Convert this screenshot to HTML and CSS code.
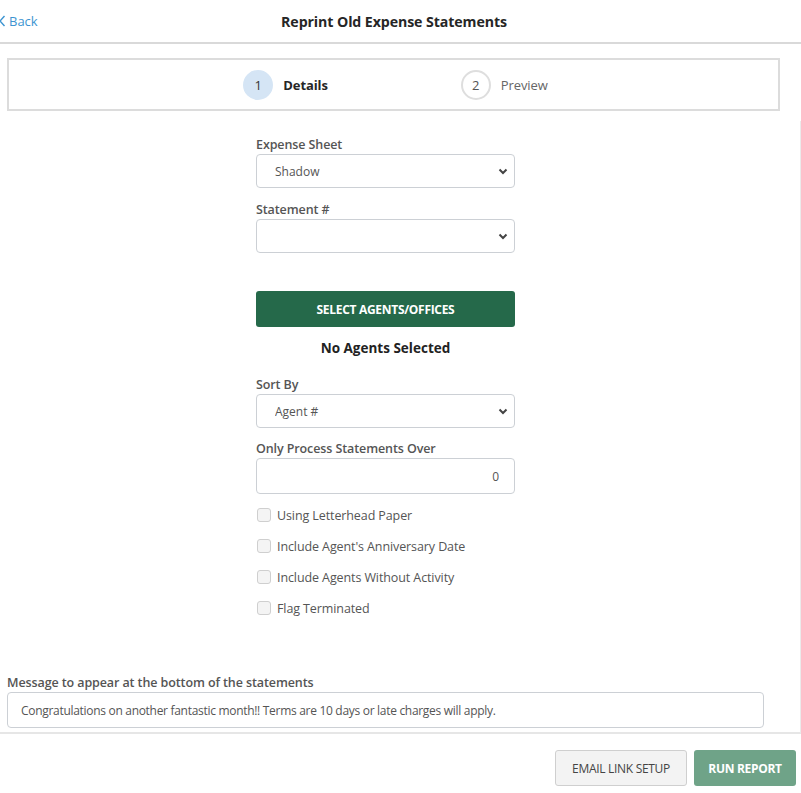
FILE: index.html
```html
<!DOCTYPE html>
<html lang="en">
<head>
<meta charset="utf-8">
<title>Reprint Old Expense Statements</title>
<link rel="stylesheet" href="styles.css">
</head>
<body>
<header class="topbar">
  <a class="back" href="#">
    <svg class="back-icon" width="7" height="12" viewBox="0 0 7 12"><path d="M5.5 1 L1 6 L5.5 11" fill="none" stroke="currentColor" stroke-width="1.4"/></svg>
    Back
  </a>
  <h1 class="title">Reprint Old Expense Statements</h1>
</header>

<nav class="stepper">
  <div class="step active"><span class="step-num">1</span><span class="step-label">Details</span></div>
  <div class="step"><span class="step-num">2</span><span class="step-label">Preview</span></div>
</nav>

<main class="content">
  <form class="form">
    <label class="field-label">Expense Sheet</label>
    <div class="select-wrap">
      <select class="control"><option>Shadow</option></select>
      <svg class="chev" width="10" height="7" viewBox="0 0 10 7"><path d="M1.5 1.5 L5 5 L8.5 1.5" fill="none" stroke="currentColor" stroke-width="2"/></svg>
    </div>

    <label class="field-label gap">Statement #</label>
    <div class="select-wrap">
      <select class="control"><option></option></select>
      <svg class="chev" width="10" height="7" viewBox="0 0 10 7"><path d="M1.5 1.5 L5 5 L8.5 1.5" fill="none" stroke="currentColor" stroke-width="2"/></svg>
    </div>

    <button type="button" class="btn-agents">SELECT AGENTS/OFFICES</button>
    <p class="no-agents">No Agents Selected</p>

    <label class="field-label sort">Sort By</label>
    <div class="select-wrap">
      <select class="control"><option>Agent #</option></select>
      <svg class="chev" width="10" height="7" viewBox="0 0 10 7"><path d="M1.5 1.5 L5 5 L8.5 1.5" fill="none" stroke="currentColor" stroke-width="2"/></svg>
    </div>

    <label class="field-label over">Only Process Statements Over</label>
    <input class="control number" type="text" value="0">

    <div class="checks">
      <label class="check"><span class="box"></span>Using Letterhead Paper</label>
      <label class="check"><span class="box"></span>Include Agent's Anniversary Date</label>
      <label class="check"><span class="box"></span>Include Agents Without Activity</label>
      <label class="check"><span class="box"></span>Flag Terminated</label>
    </div>
  </form>

  <section class="message">
    <label class="field-label">Message to appear at the bottom of the statements</label>
    <input class="control message-input" type="text" value="Congratulations on another fantastic month!! Terms are 10 days or late charges will apply.">
  </section>
</main>

<footer class="actions">
  <button type="button" class="btn-light">EMAIL LINK SETUP</button>
  <button type="button" class="btn-run">RUN REPORT</button>
</footer>
</body>
</html>
```

FILE: styles.css
```css
* { box-sizing: border-box; }

body {
  margin: 0;
  width: 801px;
  font-family: "Open Sans", "Noto Sans", sans-serif;
  color: #555;
  background: #fff;
}

/* top bar */
.topbar {
  height: 44px;
  border-bottom: 2px solid #d9d9d9;
  display: grid;
  grid-template-columns: 1fr auto 1fr;
  align-items: center;
  padding-right: 13px;
}
.back {
  display: flex;
  align-items: center;
  gap: 3px;
  color: #3d94d1;
  text-decoration: none;
  font-size: 13px;
  margin-left: -1px;
}
.title {
  margin: 0;
  font-size: 14.2px;
  font-weight: 700;
  color: #262626;
  letter-spacing: -0.1px;
}

/* step indicator */
.stepper {
  margin: 14px 21px 0 7px;
  height: 53px;
  border: 2px solid #dcdcdc;
  display: flex;
  justify-content: center;
  align-items: center;
  gap: 133px;
  padding-left: 4px;
}
.step {
  display: flex;
  align-items: center;
  gap: 10px;
}
.step-num {
  width: 30px;
  height: 30px;
  border-radius: 50%;
  border: 2px solid #dedede;
  display: flex;
  align-items: center;
  justify-content: center;
  font-size: 13px;
  color: #555;
}
.step.active .step-num {
  background: #d5e5f5;
  border-color: #d5e5f5;
  color: #333;
}
.step-label {
  font-size: 13px;
  color: #666;
  letter-spacing: -0.1px;
}
.step.active .step-label {
  font-weight: 700;
  color: #262626;
}

/* main area */
.content {
  margin-top: 10px;
  padding-top: 14px;
  border-right: 1px solid #ebebeb;
  border-bottom: 2px solid #e6e6e6;
  padding-bottom: 4px;
}
.form {
  width: 259px;
  margin-left: 256px;
  display: flex;
  flex-direction: column;
}
.field-label {
  display: block;
  font-size: 12.5px;
  font-weight: 600;
  color: #555;
  line-height: 19px;
  letter-spacing: -0.1px;
}
.field-label.gap { margin-top: 12px; }
.field-label.sort { margin-top: 17px; }
.field-label.over { margin-top: 11px; }

.select-wrap { position: relative; }
.control {
  display: block;
  width: 100%;
  height: 34px;
  border: 1px solid #ccd0d5;
  border-radius: 4px;
  background: #fff;
  font-family: inherit;
  font-size: 12px;
  color: #555;
  padding: 0 18px;
  appearance: none;
  -webkit-appearance: none;
  outline: none;
}
.chev {
  position: absolute;
  right: 7px;
  top: 14px;
  color: #444;
  pointer-events: none;
}
.number {
  height: 36px;
  text-align: right;
  padding-right: 15px;
}

.btn-agents {
  margin-top: 38px;
  height: 36px;
  border: none;
  border-radius: 3px;
  background: #25694a;
  color: #fff;
  font-family: inherit;
  font-size: 12px;
  font-weight: 700;
  letter-spacing: -0.3px;
}
.no-agents {
  margin: 11px 0 0;
  line-height: 20px;
  text-align: center;
  font-size: 13.5px;
  font-weight: 700;
  color: #222;
}

.checks {
  margin-top: 11px;
  display: flex;
  flex-direction: column;
  gap: 11px;
}
.check {
  display: flex;
  align-items: center;
  gap: 6px;
  height: 20px;
  font-size: 12.5px;
  color: #555;
  padding-left: 1px;
  letter-spacing: -0.1px;
}
.box {
  width: 14px;
  height: 14px;
  border: 1px solid #cfcfcf;
  border-radius: 3px;
  background: #f4f4f4;
}

.message {
  margin-top: 55px;
  padding: 0 36px 0 7px;
}
.message-input {
  height: 36px;
  padding: 0 13px;
  letter-spacing: -0.3px;
}

/* footer buttons */
.actions {
  display: flex;
  justify-content: flex-end;
  gap: 7px;
  padding: 16px 5px 0 0;
}
.btn-light, .btn-run {
  height: 36px;
  border-radius: 3px;
  font-family: inherit;
  font-size: 12px;
  letter-spacing: -0.3px;
}
.btn-light {
  width: 132px;
  background: #f3f3f3;
  border: 1px solid #cfcfcf;
  color: #444;
}
.btn-run {
  width: 102px;
  background: #6fa388;
  border: none;
  color: #fff;
  font-weight: 700;
}
```
